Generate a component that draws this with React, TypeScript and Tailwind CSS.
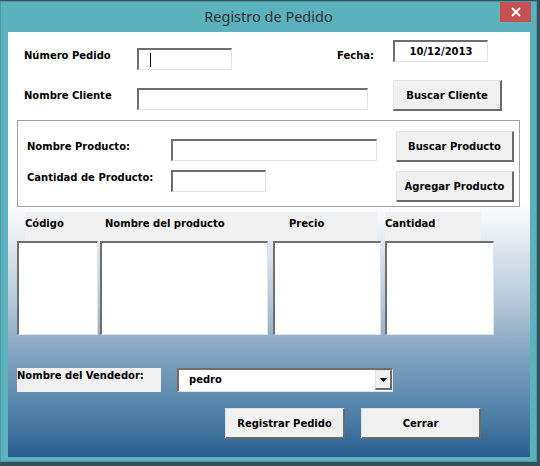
const label = "font-['DejaVu_Sans',sans-serif] text-[10px] font-bold leading-[13px] text-black";
const sunken = 'bg-white border-t-2 border-l-2 border-r border-b border-t-[#6e6e6e] border-l-[#6e6e6e] border-r-[#e3e3e3] border-b-[#e3e3e3]';
const raised = 'bg-[#f0f0f0] border-t border-l border-r-2 border-b-2 border-t-[#e3e3e3] border-l-[#e3e3e3] border-r-[#6a6a6a] border-b-[#6a6a6a] flex items-center justify-center';

const Btn = ({ text, className }: { text: string; className: string }) => (
    <div className={`${raised} ${className}`}>
        <span className={label}>{text}</span>
    </div>
);

const App = () => {
    return (
        <div className="w-[540px] h-[466px] bg-[#35505a] overflow-hidden">
            <div className="mt-[1px] w-[537px] h-[461px] border border-[#4a9aa4] bg-[#5bb1bc] flex flex-col">
                {/* title bar */}
                <div className="relative h-[30px] flex items-center justify-center">
                    <span className="font-['Noto_Sans',sans-serif] text-[14.5px] leading-[20px] text-[#333] -mt-[2px]">
                        Registro de Pedido
                    </span>
                    <div className="absolute top-0 right-[5px] w-[31px] h-[20px] bg-[#c75050] flex items-center justify-center">
                        <svg width="10" height="10" viewBox="0 0 10 10">
                            <path d="M1 1 L9 9 M9 1 L1 9" stroke="#fff" strokeWidth="2" />
                        </svg>
                    </div>
                </div>

                {/* client area */}
                <div className="ml-[7px] w-[522px] h-[425px] flex flex-col bg-[linear-gradient(to_bottom,#ffffff_0%,#ffffff_40%,#dfe7ee_50%,#b7cad9_63%,#85a5c0_75%,#5686ac_88%,#2a5f8f_100%)]">
                    {/* numero / fecha */}
                    <div className="mt-[8px] h-[31px] flex items-start pl-[16px]">
                        <span className={`${label} w-[113px] mt-[9px]`}>Número Pedido</span>
                        <div className={`${sunken} w-[95px] h-[22px] mt-[8px] flex items-center pl-[11px]`}>
                            <div className="w-[1px] h-[14px] bg-black" />
                        </div>
                        <span className={`${label} ml-[105px] w-[56px] mt-[9px]`}>Fecha:</span>
                        <div className={`${sunken} w-[95px] h-[22px] flex items-center justify-center`}>
                            <span className={label}>10/12/2013</span>
                        </div>
                    </div>

                    {/* cliente */}
                    <div className="mt-[9px] h-[31px] flex items-start pl-[16px]">
                        <span className={`${label} w-[113px] mt-[9px]`}>Nombre Cliente</span>
                        <div className={`${sunken} w-[231px] h-[22px] mt-[8px]`} />
                        <Btn text="Buscar Cliente" className="ml-[25px] w-[109px] h-[31px]" />
                    </div>

                    {/* producto frame */}
                    <div className="mt-[9px] ml-[9px] w-[503px] h-[87px] border border-[#a0a0a0] bg-white flex flex-col pl-[9px]">
                        <div className="mt-[10px] h-[31px] flex items-start">
                            <span className={`${label} w-[144px] mt-[9px]`}>Nombre Producto:</span>
                            <div className={`${sunken} w-[206px] h-[22px] mt-[8px]`} />
                            <Btn text="Buscar Producto" className="ml-[19px] w-[118px] h-[31px]" />
                        </div>
                        <div className="mt-[8px] h-[32px] flex items-start">
                            <span className={`${label} w-[144px] mt-[1px]`}>Cantidad de Producto:</span>
                            <div className={`${sunken} w-[95px] h-[22px]`} />
                            <Btn text="Agregar Producto" className="mt-[1px] ml-[130px] w-[118px] h-[31px]" />
                        </div>
                    </div>

                    {/* column headers */}
                    <div className="mt-[5px] ml-[17px] h-[29px] flex">
                        <div className={`${label} bg-[#f0f0f0] w-[79px] pt-[5px]`}>Código</div>
                        <div className={`${label} bg-[#f0f0f0] w-[166px] pt-[5px] pl-[1px]`}>Nombre del producto</div>
                        <div className={`${label} bg-[#f0f0f0] w-[107px] pt-[5px] pl-[19px]`}>Precio</div>
                        <div className={`${label} bg-[#f0f0f0] w-[96px] pt-[5px] ml-[8px]`}>Cantidad</div>
                    </div>

                    {/* lists */}
                    <div className="ml-[9px] h-[94px] flex">
                        <div className={`${sunken} w-[81px]`} />
                        <div className={`${sunken} w-[168px] ml-[2px]`} />
                        <div className={`${sunken} w-[108px] ml-[5px]`} />
                        <div className={`${sunken} w-[109px] ml-[4px]`} />
                    </div>

                    {/* vendedor */}
                    <div className="mt-[33px] ml-[9px] h-[24px] flex">
                        <div className={`${label} bg-[#f0f0f0] w-[144px] pt-[1px]`}>Nombre del Vendedor:</div>
                        <div className={`${sunken} ml-[16px] w-[216px] flex items-stretch`}>
                            <span className={`${label} flex-1 pl-[10px] pt-[3px]`}>pedro</span>
                            <div className="w-[17px] mb-[1px] bg-[#f0f0f0] border-t border-l border-r-2 border-b-2 border-t-[#e3e3e3] border-l-[#e3e3e3] border-r-[#6a6a6a] border-b-[#6a6a6a] flex items-center justify-center">
                                <svg width="7" height="4" viewBox="0 0 7 4">
                                    <path d="M0 0 H7 L3.5 4 Z" fill="#000" />
                                </svg>
                            </div>
                        </div>
                    </div>

                    {/* actions */}
                    <div className="mt-[16px] ml-[217px] h-[31px] flex gap-[16px]">
                        <Btn text="Registrar Pedido" className="w-[120px] h-[31px]" />
                        <Btn text="Cerrar" className="w-[120px] h-[31px]" />
                    </div>
                </div>
            </div>
        </div>
    );
};

export default App;
